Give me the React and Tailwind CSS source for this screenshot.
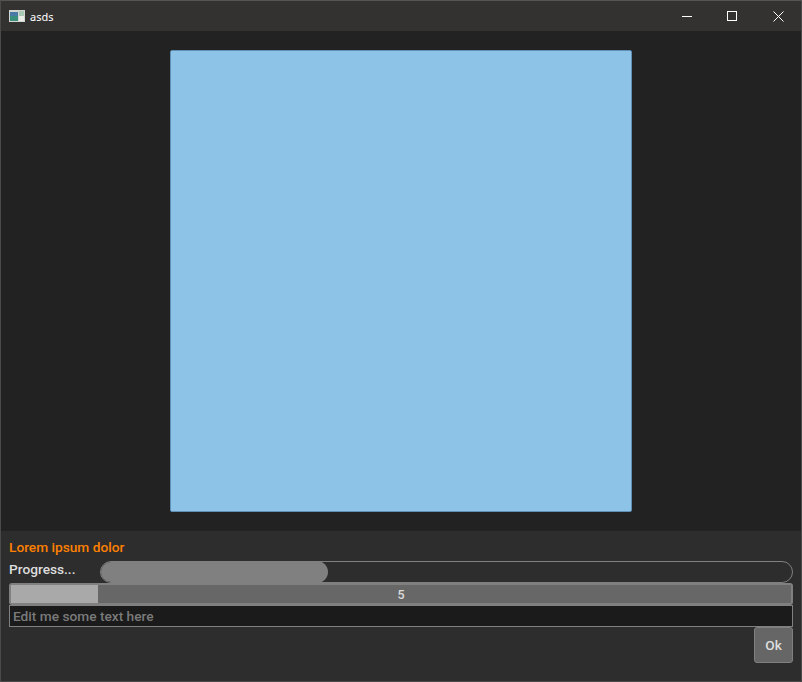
import React from "react";

const App = () => {
  return (
    <div className="flex flex-col w-[802px] h-[682px] bg-[#2d2d2d] border border-[#4a4a4a] border-t-[#555] font-['Roboto',sans-serif] overflow-hidden">
      {/* title bar */}
      <div className="flex items-center h-[30px] bg-[#333230] shrink-0">
        <svg width="16" height="12" viewBox="0 0 16 12" className="ml-[8px]">
          <rect width="16" height="12" fill="#d4d6d2" />
          <rect x="1" y="2" width="8" height="9" fill="#3a8f7c" />
          <rect x="1" y="2" width="8" height="4" fill="#4a7aa6" />
          <rect x="10" y="1" width="5" height="5" fill="#a9c9b4" />
          <rect x="10" y="6" width="5" height="5" fill="#ecece8" />
        </svg>
        <span className="ml-[5px] text-[11px] leading-none text-white font-['Noto_Sans',sans-serif]">asds</span>
        <div className="ml-auto flex items-center h-full">
          <button className="flex items-center justify-center w-[46px] h-full pl-[2px]">
            <span className="block w-[10px] h-px bg-white" />
          </button>
          <button className="flex items-center justify-center w-[46px] h-full">
            <span className="block w-[10px] h-[10px] border border-white" />
          </button>
          <button className="flex items-center justify-center w-[46px] h-full">
            <svg width="11" height="11" viewBox="0 0 11 11" stroke="#fff" strokeWidth="1">
              <path d="M0.5 0.5 L10.5 10.5 M10.5 0.5 L0.5 10.5" />
            </svg>
          </button>
        </div>
      </div>

      {/* image area */}
      <div className="flex items-center justify-center h-[500px] bg-[#222222] shrink-0">
        <div className="w-[462px] h-[462px] bg-[#8ec3e8] border border-[#5f8fb5] rounded-[2px]" />
      </div>

      {/* bottom panel */}
      <div className="flex flex-col flex-1 px-[8px] pt-[8px]">
        <div className="h-[22px] text-[13.7px] leading-[17px] font-medium text-[#ff8000]">Lorem ipsum dolor</div>
        <div className="flex items-center h-[22px]">
          <span className="w-[91px] -mt-[6px] text-[13.7px] font-medium text-[#dedede]">Progress...</span>
          <div className="flex-1 h-[22px] rounded-[11px] border border-[#808080] overflow-hidden">
            <div className="w-[228px] h-[22px] -mt-px -ml-px rounded-[11px] bg-[#808080]" />
          </div>
        </div>
        <div className="relative h-[22px] bg-[#676767] border-2 border-[#808080] rounded-[3px]">
          <div className="w-[87px] h-full bg-[#a9a9a9]" />
          <span className="absolute inset-0 flex items-center justify-center pt-[2px] text-[12.5px] font-medium text-[#dedede]">5</span>
        </div>
        <input
          readOnly
          placeholder="Edit me some text here"
          className="h-[22px] px-[3px] bg-[#1b1b1b] border border-[#808080] text-[13.7px] font-medium placeholder:text-[#7a7a7a] outline-none"
        />
        <div className="flex justify-end">
          <button className="w-[39px] h-[36px] bg-[#666666] border border-[#808080] rounded-[3px] text-[13.7px] font-medium text-[#dedede]">
            Ok
          </button>
        </div>
      </div>
    </div>
  );
};

export default App;
